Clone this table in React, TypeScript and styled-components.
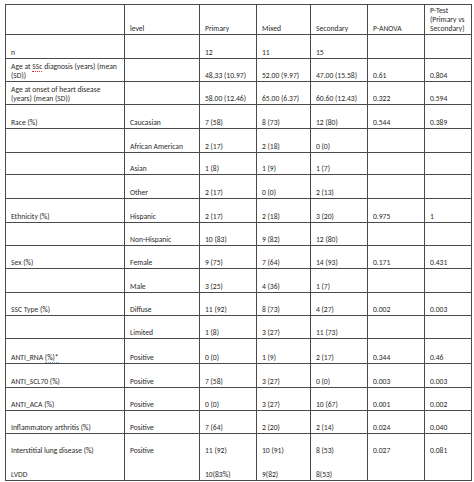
import React from 'react';
import styled, { createGlobalStyle } from 'styled-components';

const GlobalStyle = createGlobalStyle`
  html, body {
    margin: 0;
    padding: 0;
    background: #ffffff;
  }
  body {
    font-family: 'Carlito', 'Lato', 'Liberation Sans', sans-serif;
  }
`;

const Page = styled.div`
  width: 474px;
  height: 482px;
  padding: 4px 0 0 5px;
  box-sizing: border-box;
  overflow: hidden;
`;

const Table = styled.table`
  border-collapse: collapse;
  table-layout: fixed;
  width: 466px;
  font-size: 7.6px;
  line-height: 9px;
  color: #2a2a2a;
`;

const Row = styled.tr<{ h: number }>`
  height: ${(p) => p.h}px;
`;

const Cell = styled.td<{ top?: boolean }>`
  border: 1px solid #4a4a4a;
  padding: ${(p) => (p.top ? '12px 2px 1px 5px' : '0 2px 1px 5px')};
  vertical-align: ${(p) => (p.top ? 'top' : 'bottom')};
  text-align: left;
  white-space: normal;
  overflow: hidden;
`;

const Second = styled.div`
  margin-top: 15px;
`;

const Squiggle = styled.span<{ tone: string }>`
  border-bottom: 1px dotted ${(p) => p.tone};
`;

const widths = [119, 75, 57, 54, 57, 57, 47];

type R = { h: number; cells: React.ReactNode[] };

const rows: R[] = [
  { h: 30, cells: ['', 'level', 'Primary', 'Mixed', 'Secondary', 'P-ANOVA', 'P-Test (Primary vs Secondary)'] },
  { h: 24, cells: ['n', '', '12', '11', '15', '', ''] },
  {
    h: 23,
    cells: [
      <>Age at <Squiggle tone="#d33">SSc</Squiggle> diagnosis (years) (mean (SD))</>,
      '', '48.33 (10.97)', '52.00 (9.97)', '47.00 (15.58)', '0.61', '0.804',
    ],
  },
  { h: 23, cells: ['Age at onset of heart disease (years) (mean (SD))', '', '58.00 (12.46)', '65.00 (6.37)', '60.60 (12.43)', '0.322', '0.594'] },
  { h: 24, cells: ['Race (%)', 'Caucasian', '7 (58)', '8 (73)', '12 (80)', '0.544', '0.389'] },
  { h: 24, cells: ['', 'African American', '2 (17)', '2 (18)', '0 (0)', '', ''] },
  { h: 22, cells: ['', 'Asian', '1 (8)', '1 (9)', '1 (7)', '', ''] },
  { h: 24, cells: ['', 'Other', '2 (17)', '0 (0)', '2 (13)', '', ''] },
  { h: 24, cells: ['Ethnicity (%)', 'Hispanic', '2 (17)', '2 (18)', '3 (20)', '0.975', '1'] },
  { h: 23, cells: ['', 'Non-Hispanic', '10 (83)', '9 (82)', '12 (80)', '', ''] },
  { h: 23, cells: ['Sex (%)', 'Female', '9 (75)', '7 (64)', '14 (93)', '0.171', '0.431'] },
  { h: 24, cells: ['', 'Male', '3 (25)', '4 (36)', '1 (7)', '', ''] },
  { h: 23, cells: ['SSC Type (%)', 'Diffuse', '11 (92)', '8 (73)', '4 (27)', '0.002', '0.003'] },
  { h: 23, cells: ['', 'Limited', '1 (8)', '3 (27)', '11 (73)', '', ''] },
  {
    h: 25,
    cells: [
      <>ANTI_RNA <Squiggle tone="#7aa7d8">(%)*</Squiggle></>,
      'Positive', '0 (0)', '1 (9)', '2 (17)', '0.344', '0.46',
    ],
  },
  { h: 24, cells: ['ANTI_SCL70 (%)', 'Positive', '7 (58)', '3 (27)', '0 (0)', '0.003', '0.003'] },
  { h: 23, cells: ['ANTI_ACA (%)', 'Positive', '0 (0)', '3 (27)', '10 (67)', '0.001', '0.002'] },
  { h: 23, cells: ['Inflammatory arthritis (%)', 'Positive', '7 (64)', '2 (20)', '2 (14)', '0.024', '0.040'] },
];

const lastRow: [string, string?][] = [
  ['Interstitial lung disease (%)', 'LVDD'],
  ['Positive'],
  ['11 (92)', '10(83%)'],
  ['10 (91)', '9(82)'],
  ['8 (53)', '8(53)'],
  ['0.027'],
  ['0.081'],
];

export default function App() {
  return (
    <Page>
      <GlobalStyle />
      <Table>
        <colgroup>
          {widths.map((w, i) => (
            <col key={i} style={{ width: w }} />
          ))}
        </colgroup>
        <tbody>
          {rows.map((r, i) => (
            <Row key={i} h={r.h}>
              {r.cells.map((c, j) => (
                <Cell key={j}>{c}</Cell>
              ))}
            </Row>
          ))}
          <Row h={45}>
            {lastRow.map(([a, b], j) => (
              <Cell key={j} top>
                <div>{a}</div>
                {b && <Second>{b}</Second>}
              </Cell>
            ))}
          </Row>
        </tbody>
      </Table>
    </Page>
  );
}
